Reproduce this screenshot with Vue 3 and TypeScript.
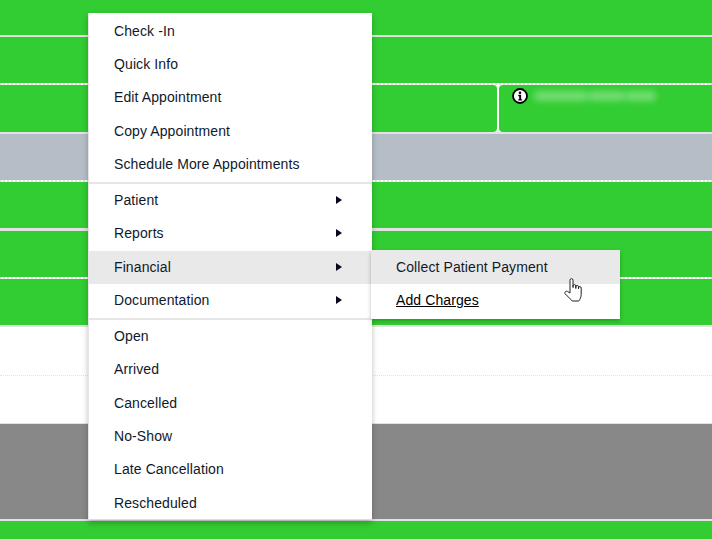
<script setup lang="ts">
interface Row {
  kind: string
  height: number
  line: string
  lineWidth: number
}
interface Item {
  label: string
  sub?: boolean
  active?: boolean
}

const rows: Row[] = [
  { kind: 'green', height: 35, line: 'solid', lineWidth: 2 },
  { kind: 'green', height: 46, line: 'dotted', lineWidth: 2 },
  { kind: 'split', height: 47, line: 'solid', lineWidth: 2 },
  { kind: 'slate', height: 46, line: 'dotted', lineWidth: 2 },
  { kind: 'green', height: 46, line: 'solid', lineWidth: 3 },
  { kind: 'green', height: 46, line: 'dotted', lineWidth: 2 },
  { kind: 'green', height: 46, line: 'solid', lineWidth: 2 },
  { kind: 'blank', height: 48, line: 'dotted', lineWidth: 1 },
  { kind: 'blank', height: 47, line: 'solid', lineWidth: 1 },
  { kind: 'gray', height: 95, line: 'solid', lineWidth: 2 },
  { kind: 'green', height: 18, line: 'none', lineWidth: 0 },
]

const groups: Item[][] = [
  [
    { label: 'Check -In' },
    { label: 'Quick Info' },
    { label: 'Edit Appointment' },
    { label: 'Copy Appointment' },
    { label: 'Schedule More Appointments' },
  ],
  [
    { label: 'Patient', sub: true },
    { label: 'Reports', sub: true },
    { label: 'Financial', sub: true, active: true },
    { label: 'Documentation', sub: true },
  ],
  [
    { label: 'Open' },
    { label: 'Arrived' },
    { label: 'Cancelled' },
    { label: 'No-Show' },
    { label: 'Late Cancellation' },
    { label: 'Rescheduled' },
  ],
]
</script>

<template>
  <div class="page">
    <div class="schedule">
      <div
        v-for="(row, i) in rows"
        :key="i"
        class="row"
        :class="row.kind"
        :style="{ height: row.height + row.lineWidth + 'px', borderBottomWidth: row.lineWidth + 'px', borderBottomStyle: row.line }"
      >
        <template v-if="row.kind === 'split'">
          <div class="cell"></div>
          <div class="cell event">
            <svg class="info" viewBox="0 0 16 16" width="16" height="16" aria-hidden="true">
              <circle cx="8" cy="8" r="7" fill="#fff" stroke="#000" stroke-width="1.8" />
              <circle cx="8" cy="4.700" r="1.300" fill="#000" />
              <path d="M6.300 6.800h2.800v4.400h1V12.600H6.200v-1.400h1V8.200h-.9z" fill="#000" />
            </svg>
            <div class="redacted">
              <span class="blob long"></span>
              <span class="blob mid"></span>
              <span class="blob short"></span>
            </div>
          </div>
        </template>
      </div>
    </div>

    <div class="menu">
      <div v-for="(group, g) in groups" :key="g" class="group">
        <div v-for="item in group" :key="item.label" class="item" :class="{ active: item.active }">
          <span>{{ item.label }}</span>
          <span v-if="item.sub" class="arrow"></span>
          <div v-if="item.active" class="submenu">
            <div class="item active">
              <span>Collect Patient Payment</span>
              <svg class="hand" viewBox="0 0 19 24" width="19" height="24" aria-hidden="true">
                <path
                  d="M6 15V2.200a1.500 1.500 0 0 1 3 0V9.500V8a1.400 1.400 0 0 1 2.800 0v2.500V8.800a1.300 1.300 0 0 1 2.700 0v2.200V10a1.300 1.300 0 0 1 2.700 0v6.500c0 3-1.200 4.500-2.400 6.500H8.300C6.800 21 3.500 18.500 1.300 16c-1.400-1.800.8-3.600 2.300-2.500z"
                  fill="#fff"
                  stroke="#222"
                  stroke-width="1"
                  stroke-linejoin="round"
                />
              </svg>
            </div>
            <div class="item link"><span>Add Charges</span></div>
          </div>
        </div>
      </div>
    </div>
  </div>
</template>

<style scoped>
.page {
  position: relative;
  width: 712px;
  height: 539px;
  overflow: hidden;
  background: #fff;
  font-family: "Liberation Sans", Arial, sans-serif;
}
.schedule {
  display: flex;
  flex-direction: column;
}
.row {
  box-sizing: border-box;
  display: flex;
  gap: 2px;
  border-bottom-color: #e2e2e2;
  background-clip: padding-box;
}
.green {
  background-color: #32cd32;
}
.slate {
  background-color: #b5bdc7;
}
.gray {
  background-color: #888888;
}
.blank {
  background-color: #fff;
}
.cell {
  flex: 1;
  background: #32cd32;
  border-radius: 0 4px 4px 0;
}
.event {
  flex: 0 0 213px;
  display: flex;
  align-items: flex-start;
  gap: 6px;
  padding: 3px 0 0 13px;
  box-sizing: border-box;
  border-radius: 4px 0 0 4px;
}
.info {
  flex: none;
}
.redacted {
  display: flex;
  gap: 1px;
  width: 122px;
  height: 10px;
  margin-top: 3px;
  filter: blur(3px);
}
.blob {
  height: 100%;
  border-radius: 4px;
  background: rgba(255, 255, 255, 0.32);
}
.long {
  width: 54px;
}
.mid {
  width: 36px;
}
.short {
  width: 30px;
}
.menu {
  position: absolute;
  left: 88px;
  top: 13px;
  width: 284px;
  height: 507px;
  box-sizing: border-box;
  padding-top: 1px;
  background: #fff;
  border-left: 1px solid #e4e4e4;
  border-bottom: 1px solid #dddddd;
  box-shadow: 0 3px 6px rgba(0, 0, 0, 0.25);
  color: #10192b;
  font-size: 14px;
  letter-spacing: 0.1px;
}
.group:first-child {
  padding-bottom: 1px;
}
.group + .group {
  border-top: 2px solid #e6e6e6;
}
.item {
  position: relative;
  box-sizing: border-box;
  height: 33.4px;
  display: flex;
  align-items: center;
  justify-content: space-between;
  padding: 0 30px 0 25px;
}
.group:nth-child(2) > .item {
  padding-bottom: 1.4px;
}
.group:nth-child(3) > .item {
  padding-bottom: 0.8px;
}
.item.active {
  background: #e9e9e9;
}
.arrow {
  width: 0;
  height: 0;
  border-left: 6px solid #050a1c;
  border-top: 4px solid transparent;
  border-bottom: 4px solid transparent;
}
.submenu {
  position: absolute;
  left: 282px;
  top: -0.8px;
  width: 249px;
  height: 69px;
  background: #fff;
  box-shadow: 0 2px 4px rgba(0, 0, 0, 0.25);
  z-index: 2;
}
.submenu .item.active {
  height: 34px;
}
.submenu .link {
  padding-bottom: 1.4px;
}
.hand {
  position: absolute;
  left: 193px;
  top: 28px;
}
.link {
  color: #000;
  text-decoration: underline;
}
</style>
